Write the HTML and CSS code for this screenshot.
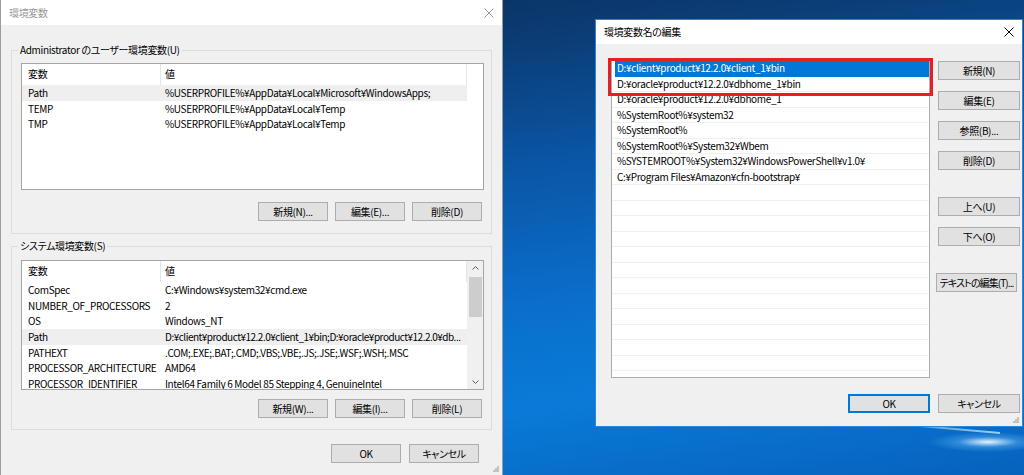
FILE: index.html
```html
<!DOCTYPE html>
<html lang="ja">
<head>
    <meta charset="UTF-8">
    <meta name="viewport" content="width=device-width, initial-scale=1.0">
    <title>環境変数名の編集</title>
    <link rel="stylesheet" href="styles.css">
</head>
<body>

<div class="desktop">
    <div class="streak"></div>
    <div class="glow"></div>

    <!-- 環境変数 (behind, inactive) -->
    <div class="window env">
        <div class="titlebar">
            <span class="title">環境変数</span>
            <svg class="close" width="10" height="10" viewBox="0 0 10 10"><path d="M0.5 0.5 L9.5 9.5 M9.5 0.5 L0.5 9.5"/></svg>
        </div>
        <div class="window-body">
            <div class="group user-group">
                <span class="group-title">Administrator のユーザー環境変数(U)</span>
                <div class="listview user-list">
                    <div class="lv-cols">
                        <div class="lv-row lv-head"><span class="c-name">変数</span><span class="c-value">値</span></div>
                        <div class="lv-row hot"><span class="c-name">Path</span><span class="c-value">%USERPROFILE%¥AppData¥Local¥Microsoft¥WindowsApps;</span></div>
                        <div class="lv-row"><span class="c-name">TEMP</span><span class="c-value">%USERPROFILE%¥AppData¥Local¥Temp</span></div>
                        <div class="lv-row"><span class="c-name">TMP</span><span class="c-value">%USERPROFILE%¥AppData¥Local¥Temp</span></div>
                    </div>
                </div>
                <div class="button-row">
                    <button>新規(N)...</button>
                    <button>編集(E)...</button>
                    <button>削除(D)</button>
                </div>
            </div>

            <div class="group system-group">
                <span class="group-title">システム環境変数(S)</span>
                <div class="listview system-list">
                    <div class="lv-cols">
                        <div class="lv-row lv-head"><span class="c-name">変数</span><span class="c-value">値</span></div>
                        <div class="lv-row"><span class="c-name">ComSpec</span><span class="c-value">C:¥Windows¥system32¥cmd.exe</span></div>
                        <div class="lv-row"><span class="c-name">NUMBER_OF_PROCESSORS</span><span class="c-value">2</span></div>
                        <div class="lv-row"><span class="c-name">OS</span><span class="c-value">Windows_NT</span></div>
                        <div class="lv-row hot"><span class="c-name">Path</span><span class="c-value long">D:¥client¥product¥12.2.0¥client_1¥bin;D:¥oracle¥product¥12.2.0¥db...</span></div>
                        <div class="lv-row"><span class="c-name">PATHEXT</span><span class="c-value">.COM;.EXE;.BAT;.CMD;.VBS;.VBE;.JS;.JSE;.WSF;.WSH;.MSC</span></div>
                        <div class="lv-row"><span class="c-name">PROCESSOR_ARCHITECTURE</span><span class="c-value">AMD64</span></div>
                        <div class="lv-row"><span class="c-name">PROCESSOR_IDENTIFIER</span><span class="c-value">Intel64 Family 6 Model 85 Stepping 4, GenuineIntel</span></div>
                    </div>
                    <div class="scrollbar">
                        <svg width="17" height="14" viewBox="0 0 17 14"><path d="M5.5 8.5 L8.5 5.5 L11.5 8.5"/></svg>
                        <div class="track"><div class="thumb"></div></div>
                        <svg width="17" height="14" viewBox="0 0 17 14"><path d="M5.5 5.5 L8.5 8.5 L11.5 5.5"/></svg>
                    </div>
                </div>
                <div class="button-row">
                    <button>新規(W)...</button>
                    <button>編集(I)...</button>
                    <button>削除(L)</button>
                </div>
            </div>

            <div class="dialog-buttons">
                <button>OK</button>
                <button>キャンセル</button>
            </div>
        </div>
        <svg class="grip" width="6" height="6" viewBox="0 0 6 6"><path d="M4 0h2v2h-2zM2 2h2v2h-2zM4 2h2v2h-2zM0 4h2v2h-2zM2 4h2v2h-2zM4 4h2v2h-2z"/></svg>
    </div>

    <!-- 環境変数名の編集 (front, active) -->
    <div class="window edit">
        <div class="titlebar">
            <span class="title">環境変数名の編集</span>
            <svg class="close" width="10" height="10" viewBox="0 0 10 10"><path d="M0.5 0.5 L9.5 9.5 M9.5 0.5 L0.5 9.5"/></svg>
        </div>
        <div class="window-body">
            <div class="edit-main">
                <div class="pathlist">
                    <div class="p-row selected">D:¥client¥product¥12.2.0¥client_1¥bin</div>
                    <div class="p-row">D:¥oracle¥product¥12.2.0¥dbhome_1¥bin</div>
                    <div class="p-row">D:¥oracle¥product¥12.2.0¥dbhome_1</div>
                    <div class="p-row">%SystemRoot%¥system32</div>
                    <div class="p-row">%SystemRoot%</div>
                    <div class="p-row">%SystemRoot%¥System32¥Wbem</div>
                    <div class="p-row">%SYSTEMROOT%¥System32¥WindowsPowerShell¥v1.0¥</div>
                    <div class="p-row">C:¥Program Files¥Amazon¥cfn-bootstrap¥</div>
                    <div class="p-row"></div>
                    <div class="p-row"></div>
                    <div class="p-row"></div>
                    <div class="p-row"></div>
                    <div class="p-row"></div>
                    <div class="p-row"></div>
                    <div class="p-row"></div>
                    <div class="p-row"></div>
                    <div class="p-row"></div>
                    <div class="p-row"></div>
                    <div class="p-row"></div>
                    <div class="p-row"></div>
                    <div class="p-row"></div>
                </div>
                <div class="side-buttons">
                    <button>新規(N)</button>
                    <button>編集(E)</button>
                    <button>参照(B)...</button>
                    <button>削除(D)</button>
                    <button class="gap">上へ(U)</button>
                    <button>下へ(O)</button>
                    <button class="gap text-edit">テキストの編集(T)...</button>
                </div>
            </div>
            <div class="dialog-buttons">
                <button class="default">OK</button>
                <button>キャンセル</button>
            </div>
        </div>
        <div class="highlight-box"></div>
        <svg class="grip" width="6" height="6" viewBox="0 0 6 6"><path d="M4 0h2v2h-2zM2 2h2v2h-2zM4 2h2v2h-2zM0 4h2v2h-2zM2 4h2v2h-2zM4 4h2v2h-2z"/></svg>
    </div>
</div>

</body>
</html>
```

FILE: styles.css
```css
body {
    margin: 0;
    font-family: "Noto Sans CJK JP", "Noto Sans", sans-serif;
    font-size: 10px;
    letter-spacing: -0.35px;
    font-feature-settings: "palt";
    color: #000;
    overflow: hidden;
}

.desktop {
    position: relative;
    width: 1024px;
    height: 475px;
    overflow: hidden;
    background:
        linear-gradient(172deg, #0a2a52 0%, #0b3c74 18%, #0a57a8 40%, #0a6fcc 62%, #0a7ad8 78%, #0662bd 100%);
}

/* light streak bottom right */
.streak {
    position: absolute;
    left: 840px;
    top: 432px;
    width: 160px;
    height: 2px;
    background: linear-gradient(90deg, rgba(140, 210, 255, 0), rgba(190, 235, 255, 0.8));
    transform: rotate(5deg);
    transform-origin: right center;
}

.glow {
    position: absolute;
    left: 900px;
    top: 426px;
    width: 124px;
    height: 36px;
    background: radial-gradient(ellipse 60px 10px at 88px 16px, rgba(240, 252, 255, 0.95), rgba(120, 200, 255, 0.35) 50%, rgba(60, 150, 230, 0) 100%);
}

.window {
    position: absolute;
    box-sizing: border-box;
    display: flex;
    flex-direction: column;
    background: #f0f0f0;
}

.window.env {
    left: 0;
    top: 0;
    width: 503px;
    height: 492px;
    border: 1px solid #9c9c9c;
    border-top: none;
}

.window.edit {
    left: 595px;
    top: 19px;
    width: 428px;
    height: 408px;
    border: 1px solid #2b87d9;
}

.titlebar {
    display: flex;
    align-items: center;
    justify-content: space-between;
    background: #fff;
    padding: 0 8px 0 8px;
    flex-shrink: 0;
}

.env .titlebar {
    height: 25px;
    color: #999;
}

.edit .titlebar {
    height: 24px;
}

.title {
    line-height: 14px;
}

.close path {
    stroke: #000;
    stroke-width: 1;
    fill: none;
}

.env .close path {
    stroke: #999;
}

/* --- 環境変数 dialog --- */

.env .window-body {
    padding: 25px 10px 0 10px;
}

.group {
    position: relative;
    border: 1px solid #dcdcdc;
}

.group-title {
    position: absolute;
    left: 6px;
    top: -8px;
    padding: 0 2px;
    background: #f0f0f0;
    line-height: 14px;
}

.user-group {
    padding: 12px 7px 12px 9px;
}

.system-group {
    margin-top: 12px;
    padding: 13px 7px 11px 9px;
}

.listview {
    display: flex;
    box-sizing: border-box;
    width: 463px;
    background: #fff;
    border: 1px solid #a5a5a5;
    overflow: hidden;
}

.user-list {
    height: 127px;
}

.system-list {
    height: 130px;
}

.lv-cols {
    width: 445px;
}

.lv-row {
    display: flex;
    height: 15.7px;
    line-height: 15px;
    white-space: nowrap;
}

.lv-row.lv-head {
    height: 21px;
    line-height: 20px;
}

.lv-head span {
    border-right: 1px solid #e5e5e5;
}

.lv-row.hot {
    background: #efefef;
}

.c-name {
    box-sizing: border-box;
    width: 139px;
    padding-left: 6px;
    overflow: hidden;
}

.c-value {
    box-sizing: border-box;
    width: 306px;
    padding-left: 4px;
    overflow: hidden;
}

.c-value.long {
    letter-spacing: -0.5px;
}

.scrollbar {
    display: flex;
    flex-direction: column;
    width: 17px;
    background: #f0f0f0;
}

.scrollbar path {
    stroke: #606060;
    stroke-width: 1;
    fill: none;
}

.scrollbar .track {
    flex: 1;
    padding: 2px 2px 0 2px;
}

.scrollbar .thumb {
    height: 40px;
    background: #cdcdcd;
}

.button-row {
    display: flex;
    justify-content: flex-end;
    gap: 7px;
    margin-right: 2px;
}

.user-group .button-row {
    margin-top: 12px;
}

.system-group .button-row {
    margin-top: 9px;
}

button {
    box-sizing: border-box;
    width: 70px;
    height: 19px;
    padding: 0;
    font: inherit;
    letter-spacing: inherit;
    font-feature-settings: inherit;
    line-height: 17px;
    white-space: nowrap;
    color: #000;
    background: #e1e1e1;
    border: 1px solid #adadad;
}

.dialog-buttons {
    display: flex;
    justify-content: flex-end;
    gap: 8px;
}

.env .dialog-buttons {
    margin-top: 14px;
    margin-right: 13px;
}

.grip {
    position: absolute;
    right: 3px;
    bottom: 3px;
}

.grip path {
    fill: #c2c2c2;
}

.env .grip {
    bottom: 19px;
}

/* --- 環境変数名の編集 dialog --- */

.edit .window-body {
    padding: 16px 2px 0 15px;
}

.edit-main {
    display: flex;
    gap: 8px;
}

.pathlist {
    box-sizing: border-box;
    width: 319px;
    height: 318px;
    background: #fff;
    border: 1px solid #adadad;
    overflow: hidden;
}

.p-row {
    box-sizing: border-box;
    height: 15.5px;
    line-height: 14px;
    padding-left: 5px;
    border-bottom: 1px solid #f0f0f0;
    white-space: nowrap;
}

.p-row.selected {
    margin-left: 3px;
    padding-left: 2px;
    background: #0078d7;
    color: #fff;
    border-bottom-color: #0078d7;
}

.side-buttons {
    display: flex;
    flex-direction: column;
    align-items: flex-start;
    gap: 11px;
    padding-top: 1px;
}

.side-buttons button {
    width: 82px;
}

.side-buttons .gap {
    margin-top: 16px;
}

.side-buttons .text-edit {
    width: 81px;
    margin-left: -2px;
    letter-spacing: -0.9px;
}

.edit .dialog-buttons {
    margin-top: 16px;
}

.edit .dialog-buttons button {
    width: 82px;
}

button.default {
    border-color: #0078d7;
    box-shadow: inset 0 0 0 1px #0078d7;
}

.highlight-box {
    position: absolute;
    left: 12px;
    top: 38px;
    width: 325px;
    height: 38px;
    box-sizing: border-box;
    border: 3px solid #e81e25;
}
```
